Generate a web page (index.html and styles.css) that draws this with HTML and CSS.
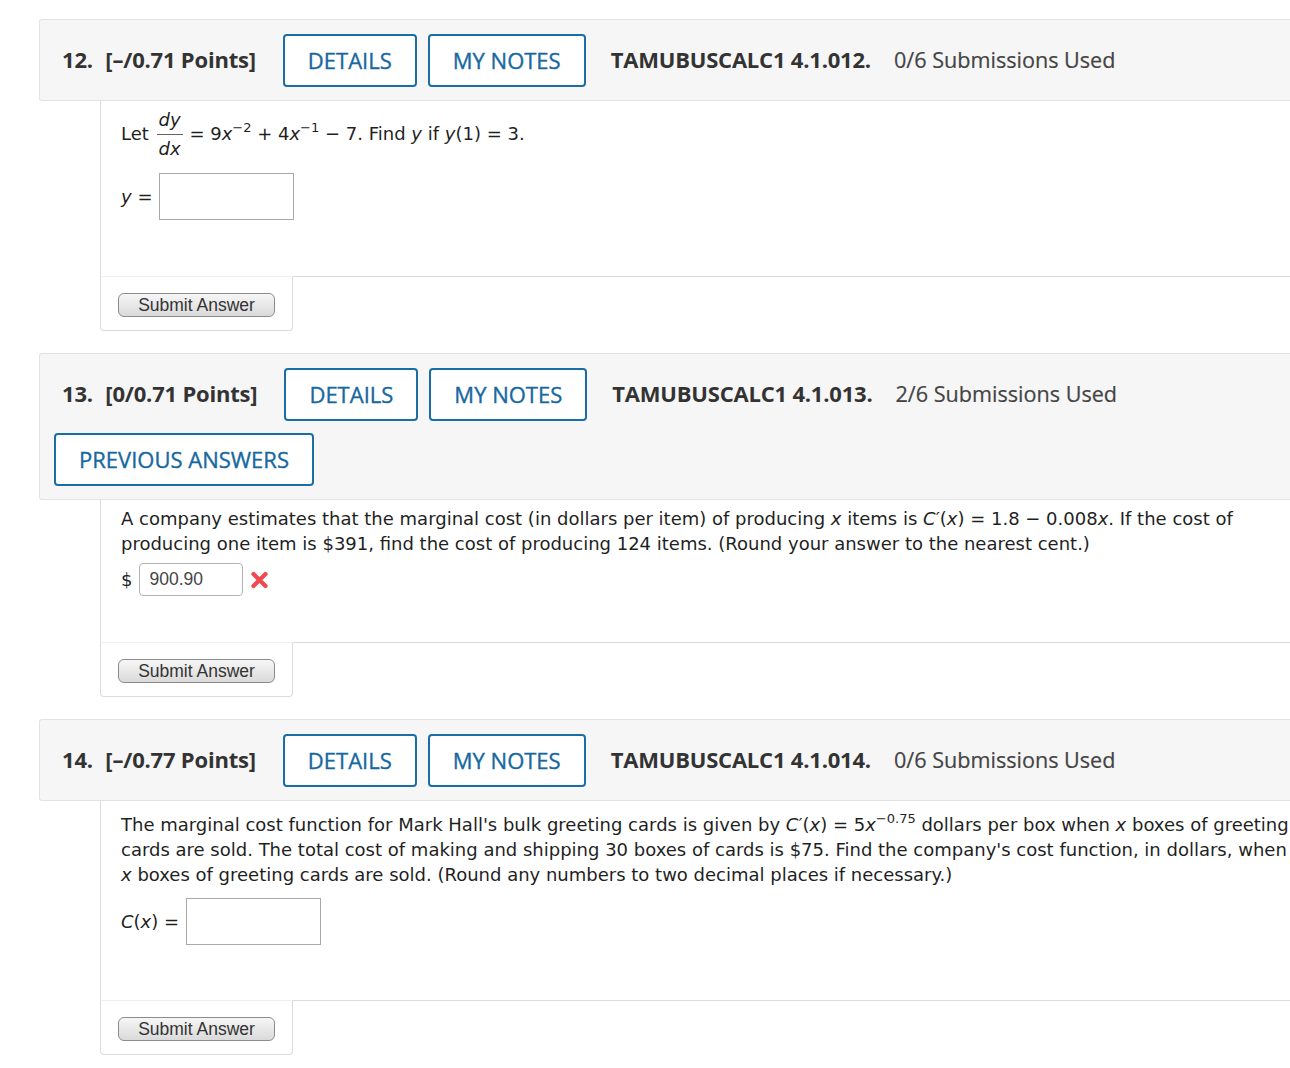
FILE: index.html
```html
<!DOCTYPE html>
<html lang="en">
<head>
<meta charset="utf-8">
<title>Questions</title>
<link rel="stylesheet" href="styles.css">
</head>
<body>
<div class="page">

  <section class="question">
    <header class="qhead">
      <h2 class="qtitle"><span class="qnum">12.</span> [–/0.71 Points]</h2>
      <button class="qbtn">DETAILS</button>
      <button class="qbtn">MY NOTES</button>
      <div class="qmeta"><span class="qcode">TAMUBUSCALC1 4.1.012.</span><span class="qsubs">0/6 Submissions Used</span></div>
    </header>
    <div class="qbody qbody-12">
      <p class="prompt">Let <span class="frac"><span class="num"><i>dy</i></span><span class="den"><i>dx</i></span></span> = 9<i>x</i><sup>−2</sup> + 4<i>x</i><sup>−1</sup> − 7. Find <i>y</i> if <i>y</i>(1) = 3.</p>
      <div class="answer answer-12"><span class="alabel"><i>y</i> =</span><input class="field field-lg" type="text"></div>
    </div>
    <div class="qfoot">
      <div class="qfoot-box"><button class="submit">Submit Answer</button></div>
      <div class="qfoot-rest"></div>
    </div>
  </section>

  <section class="question">
    <header class="qhead">
      <h2 class="qtitle"><span class="qnum">13.</span> [0/0.71 Points]</h2>
      <button class="qbtn">DETAILS</button>
      <button class="qbtn">MY NOTES</button>
      <div class="qmeta"><span class="qcode">TAMUBUSCALC1 4.1.013.</span><span class="qsubs">2/6 Submissions Used</span></div>
      <button class="qbtn qbtn-prev">PREVIOUS ANSWERS</button>
    </header>
    <div class="qbody qbody-13">
      <p class="prompt">A company estimates that the marginal cost (in dollars per item) of producing <i>x</i> items is <i>C</i>′(<i>x</i>) = 1.8 − 0.008<i>x</i>. If the cost of producing one item is $391, find the cost of producing 124 items. (Round your answer to the nearest cent.)</p>
      <div class="answer answer-13"><span class="alabel">$</span><input class="field field-sm" type="text" value="900.90"><svg class="wrong" width="19" height="18" viewBox="0 0 19 18" aria-label="incorrect"><path d="M3.5 3 L15.5 15 M15.5 3 L3.5 15" stroke="#ef4a4f" stroke-width="4.2" stroke-linecap="round"/></svg></div>
    </div>
    <div class="qfoot">
      <div class="qfoot-box"><button class="submit">Submit Answer</button></div>
      <div class="qfoot-rest"></div>
    </div>
  </section>

  <section class="question">
    <header class="qhead">
      <h2 class="qtitle"><span class="qnum">14.</span> [–/0.77 Points]</h2>
      <button class="qbtn">DETAILS</button>
      <button class="qbtn">MY NOTES</button>
      <div class="qmeta"><span class="qcode">TAMUBUSCALC1 4.1.014.</span><span class="qsubs">0/6 Submissions Used</span></div>
    </header>
    <div class="qbody qbody-14">
      <p class="prompt">The marginal cost function for Mark Hall's bulk greeting cards is given by <i>C</i>′(<i>x</i>) = 5<i>x</i><sup>−0.75</sup> dollars per box when <i>x</i> boxes of greeting cards are sold. The total cost of making and shipping 30 boxes of cards is $75. Find the company's cost function, in dollars, when <i>x</i> boxes of greeting cards are sold. (Round any numbers to two decimal places if necessary.)</p>
      <div class="answer answer-14"><span class="alabel"><i>C</i>(<i>x</i>) =</span><input class="field field-lg" type="text"></div>
    </div>
    <div class="qfoot">
      <div class="qfoot-box"><button class="submit">Submit Answer</button></div>
      <div class="qfoot-rest"></div>
    </div>
  </section>

</div>
</body>
</html>
```

FILE: styles.css
```css
html, body {
  margin: 0;
  padding: 0;
  background: #ffffff;
  overflow-x: hidden;
}

.page {
  padding: 19px 0 0 39px;
  margin-right: -12px;
}

.question {
  margin-bottom: 22px;
}

.qhead {
  display: flex;
  flex-wrap: wrap;
  align-items: center;
  column-gap: 11px;
  row-gap: 12px;
  padding: 14px 0 13px 14px;
  background: #f6f6f6;
  border: 1px solid #e2e2e2;
  border-right: 0;
  border-radius: 3px 0 0 3px;
  font-family: "Open Sans", "Noto Sans", sans-serif;
}

.qtitle {
  margin: 0 16px 3px 8px;
  font-size: 22px;
  font-weight: 700;
  color: #333333;
  letter-spacing: -0.2px;
}

.qnum {
  margin-right: 7px;
}

.qbtn {
  height: 53px;
  padding: 0 23px 2px;
  background: #ffffff;
  border: 2px solid #1b6ea5;
  border-radius: 4px;
  color: #17689f;
  font-family: "Open Sans", "Noto Sans", sans-serif;
  font-size: 22px;
  font-weight: 500;
  -webkit-text-stroke: 0.35px #17689f;
}

.qmeta {
  display: flex;
  align-items: center;
  gap: 23px;
  margin: 0 0 3px 14px;
  font-size: 22px;
  color: #333333;
}

.qcode {
  font-weight: 700;
  letter-spacing: -0.2px;
}

.qsubs {
  color: #444444;
  font-size: 21.6px;
  -webkit-text-stroke: 0.2px #444444;
}

.qbody {
  margin-left: 61px;
  padding: 8px 0 0 20px;
  border-left: 1px solid #dcdcdc;
  font-family: "DejaVu Sans", Verdana, sans-serif;
  font-size: 18px;
  line-height: 25px;
  color: #1f1f1f;
}

.qbody-12 { padding-bottom: 56px; }
.qbody-13 { padding-top: 6px; padding-bottom: 46px; }
.qbody-14 { padding-top: 11px; padding-bottom: 55px; }

.prompt {
  margin: 0;
}

.prompt sup {
  font-size: 13px;
  line-height: 0;
  vertical-align: 8px;
}

.frac {
  display: inline-flex;
  flex-direction: column;
  align-items: center;
  vertical-align: middle;
  margin: 0 1px 0 2px;
  line-height: 22px;
}

.frac .num {
  padding: 0 2px 3px;
  border-bottom: 1px solid #666666;
}

.frac .den {
  padding: 3px 2px 0;
}

.answer {
  display: flex;
  align-items: center;
}

.answer-12 { margin-top: 13px; }
.answer-13 { margin-top: 7px; }
.answer-14 { margin-top: 11px; }

.alabel {
  margin-right: 7px;
}

.field {
  box-sizing: border-box;
  margin: 0;
  background: #ffffff;
  font-family: "Liberation Sans", Arial, sans-serif;
}

.field-lg {
  width: 135px;
  height: 47px;
  border: 1px solid #a9a9a9;
  border-radius: 0;
}

.field-sm {
  width: 104px;
  height: 33px;
  padding: 0 9px;
  border: 1px solid #b3b3b3;
  border-radius: 4px;
  font-size: 17.5px;
  color: #444444;
}

.wrong {
  display: block;
  margin-left: 7px;
}

.qfoot {
  display: flex;
  margin-left: 61px;
}

.qfoot-box {
  width: 193px;
  box-sizing: border-box;
  padding: 16px 17px 13px;
  border: 1px solid #dcdcdc;
  border-top-color: #f0f0f0;
  border-radius: 0 0 4px 4px;
}

.qfoot-rest {
  flex: 1;
  border-top: 1px solid #dcdcdc;
}

.submit {
  display: block;
  width: 157px;
  height: 24px;
  padding: 0;
  border: 1px solid #8b8b8b;
  border-radius: 6px;
  background: linear-gradient(#f6f6f6, #dadada);
  font-family: "Liberation Sans", Arial, sans-serif;
  font-size: 17.5px;
  line-height: 22px;
  color: #333333;
}
```
